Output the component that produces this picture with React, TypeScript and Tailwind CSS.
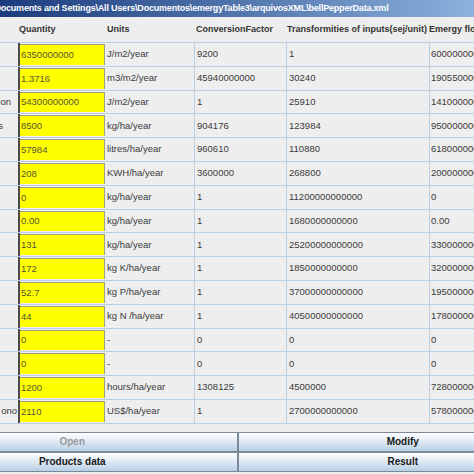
const ROWS = [
  { label: "Sun", pr: 60, q: "6350000000", u: "J/m2/year", c: "9200", t: "1", e: "60000000000" },
  { label: "Rain", pr: 60, q: "1.3716", u: "m3/m2/year", c: "45940000000", t: "30240", e: "1905500000" },
  { label: "Evapotranspiration", pr: 7, q: "54300000000", u: "J/m2/year", c: "1", t: "25910", e: "1410000000" },
  { label: "Seeds", pr: 15, q: "8500", u: "kg/ha/year", c: "904176", t: "123984", e: "9500000000" },
  { label: "Water", pr: 60, q: "57984", u: "litres/ha/year", c: "960610", t: "110880", e: "6180000000" },
  { label: "Electricity", pr: 60, q: "208", u: "KWH/ha/year", c: "3600000", t: "268800", e: "2000000000" },
  { label: "Limestone", pr: 60, q: "0", u: "kg/ha/year", c: "1", t: "11200000000000", e: "0" },
  { label: "Pesticide", pr: 60, q: "0.00", u: "kg/ha/year", c: "1", t: "1680000000000", e: "0.00" },
  { label: "Fungicide", pr: 60, q: "131", u: "kg/ha/year", c: "1", t: "25200000000000", e: "3300000000" },
  { label: "Potassium", pr: 60, q: "172", u: "kg K/ha/year", c: "1", t: "1850000000000", e: "3200000000" },
  { label: "Phosphate", pr: 60, q: "52.7", u: "kg P/ha/year", c: "1", t: "37000000000000", e: "1950000000" },
  { label: "Nitrogen", pr: 60, q: "44", u: "kg N /ha/year", c: "1", t: "40500000000000", e: "1780000000" },
  { label: "Fuel", pr: 60, q: "0", u: "-", c: "0", t: "0", e: "0" },
  { label: "Machinery", pr: 60, q: "0", u: "-", c: "0", t: "0", e: "0" },
  { label: "Labour", pr: 60, q: "1200", u: "hours/ha/year", c: "1308125", t: "4500000", e: "7280000000" },
  { label: "Serviços de patr ono", pr: 1, q: "2110", u: "US$/ha/year", c: "1", t: "2700000000000", e: "5780000000" },
];

const FONT = "font-['Liberation_Sans',Arial,sans-serif]";

function Button({ label, disabled }: { label: string; disabled?: boolean }) {
  return (
    <div
      className={`flex h-[20px] flex-1 items-center justify-center border border-[#7a8a99] bg-gradient-to-b from-[#ffffff] via-[#dde8f3] to-[#b8cfe5] text-[10px] font-bold ${
        disabled ? "text-[#9a9a9a]" : "text-[#1a1a1a]"
      }`}
    >
      {label}
    </div>
  );
}

export default function App() {
  return (
    <div className={`h-[474px] w-[474px] overflow-hidden bg-[#eeeeee] ${FONT}`}>
      <div className="ml-[-93px] flex w-[661px] flex-col">
        <div className="flex h-[17px] items-center bg-gradient-to-r from-[#0a246a] to-[#a6caf0] pl-[76px] text-[9px] font-bold tracking-[-0.2px] whitespace-nowrap text-white">
          C:\Documents and Settings\All Users\Documentos\emergyTable3\arquivosXML\bellPepperData.xml
        </div>

        <div className="flex h-[25px] items-center text-[9px] font-bold whitespace-nowrap text-[#333333]">
          <div className="w-[111px]" />
          <div className="w-[88px] pl-[1px]">Quantity</div>
          <div className="w-[88px] pl-[1px]">Units</div>
          <div className="w-[90px] pl-[2px]">ConversionFactor</div>
          <div className="w-[144px] pl-[3px]">Transformities of inputs(sej/unit)</div>
          <div className="flex-1 pl-[1px]">Emergy flow (sej/ha/year)</div>
        </div>

        <div className="flex flex-col border-t border-[#b8cfe5] text-[9.5px] text-[#3a3a3a]">
          {ROWS.map((r) => (
            <div key={r.label} className="flex h-[23.8px] border-b border-[#b8cfe5] whitespace-nowrap">
              <div
                className="flex w-[111px] items-center justify-end overflow-hidden"
                style={{ paddingRight: r.pr }}
              >
                {r.label}
              </div>
              <div className="flex w-[88px] items-center border-l-2 border-[#4a4a4a] py-[1px] pr-[1px]">
                <div className="flex h-full w-full items-center border-t border-r border-[#a0a080] bg-[#ffff00] pl-[1px] text-[#55553a]">
                  {r.q}
                </div>
              </div>
              <div className="flex w-[88px] items-center pl-[1px]">{r.u}</div>
              <div className="flex w-[90px] items-center border-l border-[#b8cfe5] pl-[2px]">{r.c}</div>
              <div className="ml-[2px] flex w-[144px] items-center border-x border-[#b8cfe5] pl-[2px]">{r.t}</div>
              <div className="flex flex-1 items-center pl-[1px]">{r.e}</div>
            </div>
          ))}
        </div>

        <div className="h-[8px]" />

        <div className="flex flex-col">
          <div className="flex">
            <Button label="Open" disabled />
            <Button label="Modify" />
          </div>
          <div className="flex">
            <Button label="Products data" />
            <Button label="Result" />
          </div>
        </div>
      </div>
    </div>
  );
}
